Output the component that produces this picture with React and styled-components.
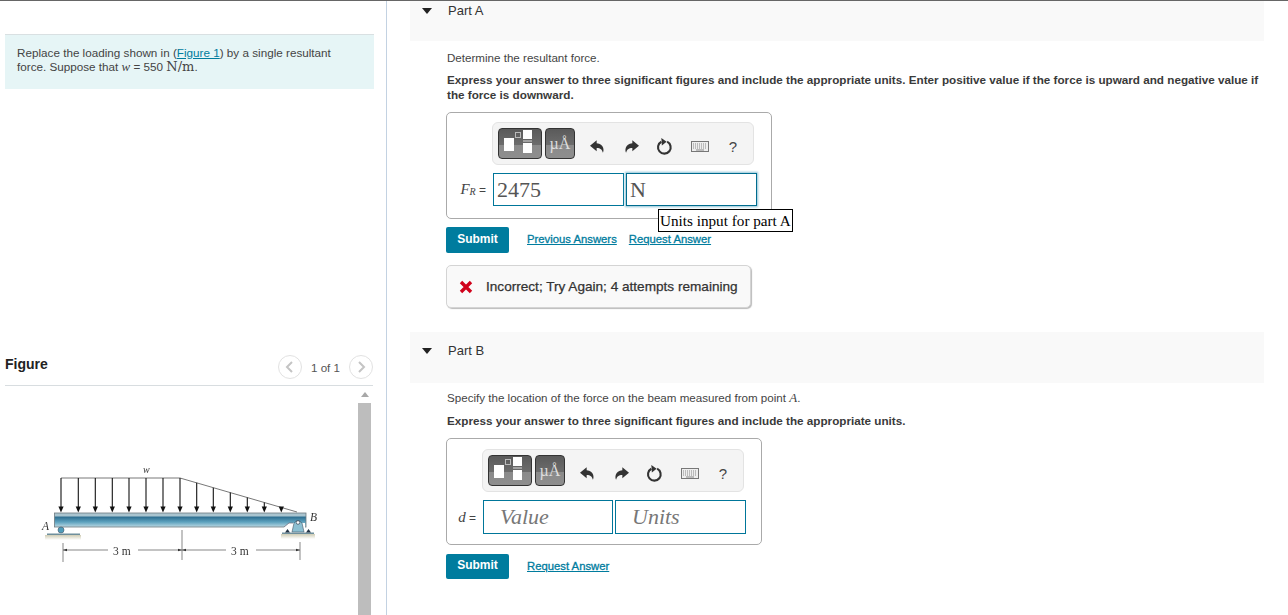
import React from "react";
import styled, { createGlobalStyle } from "styled-components";

const GlobalStyle = createGlobalStyle`
  html, body { margin: 0; height: 100%; background: #fff; overflow: hidden; }
  body { font-family: "Liberation Sans", Arial, sans-serif; font-size: 12px; color: #333; }
`;

const Page = styled.div`
  display: flex;
  height: 615px;
  box-sizing: border-box;
  border-top: 1px solid #666;
  overflow: hidden;
`;

const LeftPane = styled.aside`
  width: 386px;
  flex: none;
  box-sizing: content-box;
  border-right: 1px solid #c3d2e2;
  padding-top: 33px;
`;

const InfoBox = styled.div`
  margin-left: 5px;
  width: 369px;
  height: 55px;
  box-sizing: border-box;
  padding: 11px 12px 0;
  background: #e6f5f6;
  border-top: 1px solid #d9e0e2;
  font-size: 11.7px;
  line-height: 14px;
  color: #444;
`;

const TextLink = styled.a`
  color: #007c9e;
  text-decoration: underline;
`;

const MathVar = styled.i`
  font-family: "Liberation Serif", serif;
  font-size: 13px;
`;

const MathUnit = styled.span`
  font-family: "DejaVu Serif", serif;
  font-size: 13px;
`;

const FigureHeader = styled.div`
  margin: 261px 0 0 5px;
  width: 368px;
  height: 35px;
  box-sizing: content-box;
  border-bottom: 1px solid #d8dde0;
  display: flex;
  align-items: flex-start;
`;

const FigureTitle = styled.h2`
  margin: 6px 0 0;
  flex: 1;
  font-size: 14px;
  line-height: 16px;
  font-weight: 700;
  color: #222;
`;

const Pager = styled.div`
  display: flex;
  align-items: center;
  gap: 9px;
  margin-top: 5px;
  font-size: 11.6px;
  color: #555;
`;

const PagerButton = styled.span`
  width: 22px;
  height: 22px;
  border: 1px solid #e2e2e2;
  border-radius: 50%;
  display: flex;
  align-items: center;
  justify-content: center;
`;

const FigureBody = styled.div`
  display: flex;
  margin-left: 5px;
  width: 366px;
`;

const FigureCanvas = styled.svg`
  flex: none;
  width: 300px;
  height: 115px;
  margin: 69px 0 0 25px;
  filter: blur(0.3px);
`;

const ScrollBar = styled.div`
  margin-left: 28px;
  width: 13px;
  height: 230px;
  display: flex;
  flex-direction: column;
`;

const ScrollArrow = styled.div`
  height: 17px;
  display: flex;
  align-items: center;
  justify-content: center;
  &::before {
    content: "";
    border: 4px solid transparent;
    border-top: 0;
    border-bottom: 5px solid #a8a8a8;
  }
`;

const ScrollThumb = styled.div`
  flex: 1;
  background: #bdbdbd;
`;

const RightPane = styled.main`
  flex: 1;
  padding: 0 24px 0 23px;
`;

const PartHeader = styled.header`
  display: flex;
  align-items: flex-start;
  height: ${(p) => p.$height}px;
  box-sizing: border-box;
  padding-top: ${(p) => p.$top}px;
  background: #f9f9f9;
  font-size: 13px;
  line-height: 18px;
  color: #333;
  &::before {
    content: "";
    margin: 6px 16px 0 12px;
    border: 5px solid transparent;
    border-top: 6px solid #222;
    border-bottom: 0;
  }
`;

const PartBody = styled.section`
  padding: ${(p) => p.$top}px 0 0 37px;
`;

const Prompt = styled.p`
  margin: 0 0 ${(p) => p.$gap}px;
  line-height: 15px;
  color: #444;
  font-size: 11.6px;
`;

const Instruction = styled.p`
  margin: 0;
  line-height: 15px;
  color: #3a3a3a;
  font-size: 11.7px;
  font-weight: 700;
  white-space: nowrap;
`;

const AnswerBox = styled.div`
  position: relative;
  width: ${(p) => p.$width}px;
  height: 107px;
  box-sizing: border-box;
  margin: ${(p) => p.$top}px 0 0 -1px;
  padding-top: ${(p) => p.$pad}px;
  border: 1px solid #aaa;
  border-radius: 5px;
`;

const Toolbar = styled.div`
  width: 262px;
  height: 43px;
  box-sizing: border-box;
  margin-left: ${(p) => p.$inset}px;
  padding: 5px 0 0 5px;
  display: flex;
  align-items: flex-start;
  background: #f4f4f4;
  border: 1px solid #e3e3e3;
  border-radius: 6px;
`;

const TemplateButton = styled.button`
  width: ${(p) => p.$width}px;
  height: 31px;
  padding: 0;
  margin-right: 3px;
  flex: none;
  display: flex;
  align-items: center;
  justify-content: center;
  border: 1px solid #333;
  border-radius: 4px;
  background: linear-gradient(#5a5a5a 0%, #6c6c6c 55%, #8a8a8a 55%, #8e8e8e 100%);
  color: #dedede;
  font-family: "Liberation Serif", serif;
  font-size: 16px;
`;

const ToolIcon = styled.span`
  flex: none;
  width: ${(p) => p.$width}px;
  height: 31px;
  margin-top: 3px;
  display: flex;
  align-items: center;
  justify-content: center;
  font-size: 15px;
  color: #444;
`;

const InputRow = styled.div`
  display: flex;
  align-items: stretch;
  height: ${(p) => p.$height}px;
  margin-top: 8px;
  gap: 2px;
`;

const RowLabel = styled.span`
  flex: none;
  width: ${(p) => p.$width}px;
  box-sizing: border-box;
  padding-right: 5px;
  align-self: center;
  text-align: right;
  font-size: 12px;
  line-height: 16px;
  color: #444;
  i {
    font-family: "Liberation Serif", serif;
    font-size: 15px;
  }
  sub {
    font-size: 10px;
    font-style: italic;
    font-family: "Liberation Serif", serif;
    vertical-align: -1px;
    line-height: 0;
  }
`;

const AnswerInput = styled.input`
  width: ${(p) => p.$width}px;
  box-sizing: border-box;
  height: 100%;
  padding: 0 0 0 ${(p) => p.$pad}px;
  border: 1px solid #00769a;
  outline: none;
  background: #fff;
  font-family: "Liberation Serif", serif;
  font-size: 22px;
  color: #555;
  ${(p) => p.$focused && "box-shadow: 0 0 2px 1px #8fc4d6; border-color: #006c8e;"}
  &::placeholder {
    color: #777;
    font-style: italic;
    opacity: 1;
  }
`;

const Tooltip = styled.div`
  position: absolute;
  left: 211px;
  top: 96px;
  z-index: 2;
  padding: 0 1px;
  line-height: 21px;
  border: 1px solid #000;
  background: #fff;
  font-family: "Liberation Serif", serif;
  font-size: 15.2px;
  color: #000;
  white-space: nowrap;
`;

const ActionRow = styled.div`
  display: flex;
  align-items: center;
  margin-top: ${(p) => p.$top}px;
  margin-left: -1px;
`;

const SubmitButton = styled.button`
  width: 63px;
  height: ${(p) => p.$height}px;
  padding: 0 0 3px;
  margin-right: 18px;
  border: none;
  border-radius: 2px;
  background: #007c9e;
  color: #fff;
  font-family: "Liberation Sans", Arial, sans-serif;
  font-size: 12px;
  font-weight: 700;
`;

const ActionLink = styled(TextLink)`
  margin: 0 12px 2px 0;
  font-size: 11.3px;
  -webkit-text-stroke: 0.3px #007c9e;
`;

const Feedback = styled.div`
  display: flex;
  align-items: center;
  gap: 13px;
  width: 305px;
  height: 43px;
  box-sizing: border-box;
  margin: 12px 0 24px -1px;
  padding-left: 12px;
  background: #f9f9f9;
  border: 1px solid #d4d4d4;
  border-radius: 5px;
  box-shadow: 1px 1px 1px #bbb;
  font-size: 13.6px;
  color: #333;
  -webkit-text-stroke: 0.25px #333;
`;

const arrowXs = [31, 48.3, 65.3, 82.3, 99, 116, 133, 150, 166.7, 183.3, 200.3, 217.3, 234.3, 251.3];

function BeamFigure() {
  return (
    <FigureCanvas viewBox="0 0 300 115">
      <defs>
        <linearGradient id="beamFill" x1="0" y1="0" x2="0" y2="1">
          <stop offset="0" stopColor="#a9c4cf" />
          <stop offset="0.2" stopColor="#a9c4cf" />
          <stop offset="0.3" stopColor="#2f7092" />
          <stop offset="0.65" stopColor="#5fa3bf" />
          <stop offset="1" stopColor="#bcd9e3" />
        </linearGradient>
        <linearGradient id="groundFill" x1="0" y1="0" x2="0" y2="1">
          <stop offset="0" stopColor="#cfccb4" />
          <stop offset="1" stopColor="#ffffff" />
        </linearGradient>
      </defs>
      <path d="M31 23H150L267 57" fill="none" stroke="#555" strokeWidth="0.8" />
      {arrowXs.map((x, i) => {
        const top = i < 8 ? 23 : 23 + ((x - 150) * 34) / 117;
        return (
          <g key={x}>
            <line x1={x} y1={top} x2={x} y2="54" stroke="#111" strokeWidth="1.1" />
            <path d={`M${x - 2.6} 51.5L${x + 2.6} 51.5L${x} 57.5Z`} fill="#111" />
          </g>
        );
      })}
      <rect x="24.5" y="58" width="251.500" height="14" fill="url(#beamFill)" stroke="#6e7b80" strokeWidth="0.8" />
      <path d="M254 72l5-4h16v5h-21z" fill="#fff" />
      <path d="M254 72l5-4h4" fill="none" stroke="#667" strokeWidth="0.7" />
      <path d="M262 77l2-9q4-5 8 0l2 9z" fill="#8cc0d2" stroke="#456" strokeWidth="0.6" />
      <circle cx="268" cy="67.5" r="1.8" fill="#fff" stroke="#345" strokeWidth="0.7" />
      <rect x="252" y="77.5" width="32" height="1.5" fill="#6f8f9c" />
      <path d="M255 77.5l2.5-3.5 2.5 3.5zM276 77.5l2.5-3.5 2.5 3.5z" fill="#234" />
      <rect x="251" y="79" width="34" height="5" fill="url(#groundFill)" />
      <circle cx="31" cy="75" r="3" fill="#4f9dba" stroke="#456" strokeWidth="0.6" />
      <rect x="17" y="78.5" width="33" height="1.5" fill="#6f8f9c" />
      <rect x="15" y="80" width="36" height="5" fill="url(#groundFill)" />
      <g fontFamily="Liberation Serif, serif" fontSize="11.5" fill="#333">
        <text x="12" y="75" fontStyle="italic">A</text>
        <text x="280" y="66" fontStyle="italic">B</text>
        <text x="113" y="17.5" fontStyle="italic" fontSize="10">w</text>
        <text x="83" y="100">3 m</text>
        <text x="201" y="100">3 m</text>
      </g>
      <g stroke="#555" strokeWidth="0.7" fill="none">
        <path d="M33 88V107M152 75V105M270 87V105" />
        <path d="M33 95H78M108 95H152M152 95H196M226 95H270" />
      </g>
      <path d="M33 95l4-1.2v2.4zM152 95l-4-1.2v2.4zM152 95l4-1.2v2.4zM270 95l-4-1.2v2.4z" fill="#333" />
    </FigureCanvas>
  );
}

function TemplateGlyph() {
  return (
    <svg width="42" height="29" viewBox="0 0 42 29">
      <rect x="5" y="9" width="10" height="13" fill="#fff" />
      <rect x="16.5" y="3.5" width="5" height="5" fill="none" stroke="#bbb" />
      <rect x="24" y="1" width="9" height="9" fill="#fff" />
      <rect x="24" y="11.5" width="9" height="1" fill="#ddd" />
      <rect x="24" y="14" width="9" height="10" fill="#fff" />
    </svg>
  );
}

const UndoGlyph = ({ flip }) => (
  <svg width="15" height="16" viewBox="3 5 18 16" style={flip ? { transform: "scaleX(-1)" } : undefined}>
    <path d="M11 8.5V5l-8 6.5 8 6.5v-3.800c4.500 0 6.500 1.800 7.500 5.800 1.500-2.500 1.500-10.500-7.500-11.500z" fill="#333" />
  </svg>
);

const ResetGlyph = () => (
  <svg width="17" height="19" viewBox="0 0 16 18">
    <path d="M10.5 4.400A6 6 0 1 1 5 4.500" fill="none" stroke="#333" strokeWidth="2" />
    <path d="M5 1L10 4.500 5.500 8z" fill="#333" />
  </svg>
);

const KeyboardGlyph = () => (
  <svg width="18" height="11" viewBox="0 0 18 11">
    <rect x="0.5" y="0.5" width="17" height="10" fill="#eee" stroke="#777" />
    <path d="M2 3h14M2 5h14M2 7h14" stroke="#888" strokeWidth="1" strokeDasharray="1 1" />
    <path d="M5 9h8" stroke="#888" />
  </svg>
);

const MathToolbar = ({ inset }) => (
  <Toolbar $inset={inset}>
    <TemplateButton $width={44} type="button"><TemplateGlyph /></TemplateButton>
    <TemplateButton $width={30} type="button">µÅ</TemplateButton>
    <ToolIcon $width={38}><UndoGlyph /></ToolIcon>
    <ToolIcon $width={31}><UndoGlyph flip /></ToolIcon>
    <ToolIcon $width={35}><ResetGlyph /></ToolIcon>
    <ToolIcon $width={35}><KeyboardGlyph /></ToolIcon>
    <ToolIcon $width={32}>?</ToolIcon>
  </Toolbar>
);

const Chevron = ({ d }) => (
  <svg width="10" height="12" viewBox="0 0 10 12">
    <path d={d} fill="none" stroke="#c4c4c4" strokeWidth="2" />
  </svg>
);

export default function App() {
  return (
    <>
      <GlobalStyle />
      <Page>
        <LeftPane>
          <InfoBox>
            Replace the loading shown in (<TextLink href="#">Figure 1</TextLink>) by a single resultant
            <br />
            force. Suppose that <MathVar>w</MathVar> = 550 <MathUnit>N/m</MathUnit>.
          </InfoBox>
          <FigureHeader>
            <FigureTitle>Figure</FigureTitle>
            <Pager>
              <PagerButton><Chevron d="M7 1L2 6l5 5" /></PagerButton>
              <span>1 of 1</span>
              <PagerButton><Chevron d="M3 1l5 5-5 5" /></PagerButton>
            </Pager>
          </FigureHeader>
          <FigureBody>
            <BeamFigure />
            <ScrollBar>
              <ScrollArrow />
              <ScrollThumb />
            </ScrollBar>
          </FigureBody>
        </LeftPane>
        <RightPane>
          <PartHeader $height={40} $top={1}>Part A</PartHeader>
          <PartBody $top={9}>
            <Prompt $gap={7}>Determine the resultant force.</Prompt>
            <Instruction>
              Express your answer to three significant figures and include the appropriate units. Enter positive value if the force is upward and negative value if
              <br />
              the force is downward.
            </Instruction>
            <AnswerBox $width={326} $top={10} $pad={9}>
              <MathToolbar inset={45} />
              <InputRow $height={33}>
                <RowLabel $width={44}><i>F<sub>R</sub></i> =</RowLabel>
                <AnswerInput $width={131} $pad={3} defaultValue="2475" />
                <AnswerInput $width={131} $pad={3} $focused defaultValue="N" />
              </InputRow>
              <Tooltip>Units input for part A</Tooltip>
            </AnswerBox>
            <ActionRow $top={8}>
              <SubmitButton $height={26} type="button">Submit</SubmitButton>
              <ActionLink href="#">Previous Answers</ActionLink>
              <ActionLink href="#">Request Answer</ActionLink>
            </ActionRow>
            <Feedback>
              <svg width="14" height="14" viewBox="0 0 14 14">
                <path d="M2 2l10 10M12 2L2 12" stroke="#d0021b" strokeWidth="3.400" />
              </svg>
              Incorrect; Try Again; 4 attempts remaining
            </Feedback>
          </PartBody>
          <PartHeader $height={51} $top={10}>Part B</PartHeader>
          <PartBody $top={7}>
            <Prompt $gap={8}>Specify the location of the force on the beam measured from point <MathVar>A</MathVar>.</Prompt>
            <Instruction>Express your answer to three significant figures and include the appropriate units.</Instruction>
            <AnswerBox $width={316} $top={10} $pad={10}>
              <MathToolbar inset={35} />
              <InputRow $height={34}>
                <RowLabel $width={34}><i>d</i> =</RowLabel>
                <AnswerInput $width={130} $pad={16} placeholder="Value" />
                <AnswerInput $width={131} $pad={16} placeholder="Units" />
              </InputRow>
            </AnswerBox>
            <ActionRow $top={9}>
              <SubmitButton $height={25} type="button">Submit</SubmitButton>
              <ActionLink href="#">Request Answer</ActionLink>
            </ActionRow>
          </PartBody>
        </RightPane>
      </Page>
    </>
  );
}
